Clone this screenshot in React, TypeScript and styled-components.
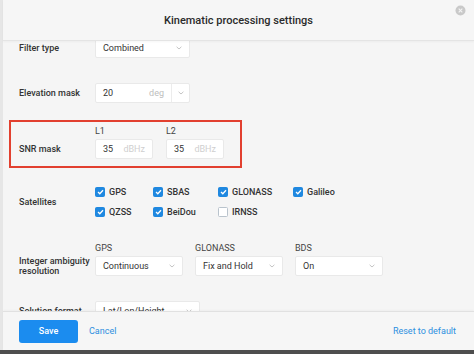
import { useLayoutEffect, useRef } from "react";
import styled, { createGlobalStyle } from "styled-components";

const GlobalStyle = createGlobalStyle`
  html, body {
    margin: 0;
    padding: 0;
    background: #4e4e4e;
    font-family: Roboto, "Liberation Sans", sans-serif;
  }
`;

const Screen = styled.div`
  width: 474px;
  height: 354px;
  background: #4e4e4e;
`;

const Modal = styled.div`
  height: 350px;
  display: flex;
  flex-direction: column;
  background: #f5f5f5;
  border-left: 3px solid #e6e6e6;
`;

const Header = styled.div`
  position: relative;
  height: 40px;
  flex-shrink: 0;
  display: flex;
  align-items: center;
  justify-content: center;
  background: #f6f6f6;
  border-bottom: 1px solid #e4e4e4;
  box-shadow: 0 1px 2px rgba(0, 0, 0, 0.04);
  z-index: 1;
`;

const Title = styled.h1`
  margin: 0;
  font-size: 11px;
  font-weight: 500;
  color: #2b2b2b;
`;

const Close = styled.button`
  position: absolute;
  top: 5px;
  right: 8px;
  width: 11px;
  height: 11px;
  padding: 0;
  border: 0;
  background: none;
  display: flex;
`;

const Body = styled.div`
  flex: 1;
  overflow: hidden;
`;

const Content = styled.div`
  padding: 12px 0 40px;
  display: flex;
  flex-direction: column;
`;

const Row = styled.div<{ $gap?: number; $align?: string }>`
  display: flex;
  align-items: ${({ $align }) => $align || "center"};
  padding-left: 16px;
  margin-top: ${({ $gap }) => $gap || 0}px;
`;

const Highlight = styled.div`
  margin: 17px 0 0 6px;
  width: 233px;
  box-sizing: border-box;
  border: 2px solid #e2402f;
  padding: 4px 0 7px 8px;
  display: flex;
  align-items: flex-end;
`;

const Label = styled.div<{ $lh?: number }>`
  width: 76px;
  flex-shrink: 0;
  font-size: 9px;
  font-weight: 500;
  line-height: ${({ $lh }) => $lh || 11}px;
  color: #333;
`;

const Fields = styled.div`
  display: flex;
  gap: 13px;
`;

const Field = styled.div`
  display: flex;
  flex-direction: column;
  gap: 2px;
`;

const Caption = styled.div`
  font-size: 9px;
  line-height: 11px;
  color: #444;
`;

const Box = styled.div<{ $w: number }>`
  width: ${({ $w }) => $w}px;
  height: 20px;
  box-sizing: border-box;
  display: flex;
  align-items: center;
  background: #fff;
  border: 1px solid #e9e9e9;
  border-radius: 2px;
  font-size: 9px;
  color: #333;
`;

const Value = styled.span`
  flex: 1;
  padding-left: 7px;
`;

const Unit = styled.span<{ $faint?: boolean }>`
  padding-right: 7px;
  color: ${({ $faint }) => ($faint ? "#cfcfcf" : "#bdbdbd")};
`;

const Caret = styled.span`
  width: 17px;
  height: 100%;
  display: flex;
  align-items: center;
  justify-content: center;
  border-left: 1px solid #ececec;
`;

const ChevronWrap = styled.span`
  padding-right: 7px;
  display: flex;
`;

const CheckGrid = styled.div`
  display: grid;
  grid-template-columns: 58px 65px 75px auto;
  row-gap: 6px;
`;

const Check = styled.label`
  display: flex;
  align-items: center;
  gap: 4px;
  height: 14px;
  font-size: 9px;
  font-weight: 500;
  color: #333;
`;

const Tick = styled.span<{ $on: boolean }>`
  width: 10px;
  height: 10px;
  border-radius: 1.5px;
  box-sizing: border-box;
  display: flex;
  align-items: center;
  justify-content: center;
  background: ${({ $on }) => ($on ? "#1f88e0" : "#fff")};
  border: 1px solid ${({ $on }) => ($on ? "#1f88e0" : "#b9c3cc")};
`;

const Columns = styled.div`
  display: flex;
  gap: 12px;
`;

const Footer = styled.div`
  height: 38px;
  flex-shrink: 0;
  display: flex;
  align-items: center;
  padding: 0 18px 0 16px;
  border-top: 1px solid #e1e1e1;
  background: #f6f6f6;
  box-shadow: 0 -1px 2px rgba(0, 0, 0, 0.03);
`;

const SaveButton = styled.button`
  width: 59px;
  height: 23px;
  border: 0;
  border-radius: 3px;
  background: #1b8cef;
  color: #fff;
  font-family: inherit;
  font-size: 9px;
  font-weight: 500;
`;

const LinkButton = styled.button<{ $push?: boolean }>`
  border: 0;
  background: none;
  padding: 0;
  margin-left: ${({ $push }) => ($push ? "auto" : "11px")};
  color: #2d8fe0;
  font-family: inherit;
  font-size: 9px;
`;

const Chevron = () => (
  <svg width="6" height="4" viewBox="0 0 6 4">
    <path d="M0.6 0.8 L3 3 L5.4 0.8" fill="none" stroke="#b5b5b5" strokeWidth="0.8" />
  </svg>
);

const Select = ({ value, w }: { value: string; w: number }) => (
  <Box $w={w}>
    <Value>{value}</Value>
    <ChevronWrap>
      <Chevron />
    </ChevronWrap>
  </Box>
);

const CheckMark = () => (
  <svg width="7" height="6" viewBox="0 0 7 6">
    <path d="M1 3 L2.8 4.7 L6 1.2" fill="none" stroke="#fff" strokeWidth="1.3" />
  </svg>
);

const satellites = [
  { name: "GPS", on: true },
  { name: "SBAS", on: true },
  { name: "GLONASS", on: true },
  { name: "Galileo", on: true },
  { name: "QZSS", on: true },
  { name: "BeiDou", on: true },
  { name: "IRNSS", on: false },
];

const ambiguity = [
  { system: "GPS", mode: "Continuous" },
  { system: "GLONASS", mode: "Fix and Hold" },
  { system: "BDS", mode: "On" },
];

export default function App() {
  const body = useRef<HTMLDivElement>(null);

  useLayoutEffect(() => {
    if (body.current) body.current.scrollTop = 15;
  }, []);

  return (
    <Screen>
      <GlobalStyle />
      <Modal>
        <Header>
          <Title>Kinematic processing settings</Title>
          <Close aria-label="Close">
            <svg width="11" height="11" viewBox="0 0 11 11">
              <circle cx="5.5" cy="5.5" r="5" fill="#c9c9c9" />
              <path d="M3.7 3.7 L7.3 7.3 M7.3 3.7 L3.7 7.3" stroke="#f4f4f4" strokeWidth="1.1" />
            </svg>
          </Close>
        </Header>

        <Body ref={body}>
          <Content>
            <Row>
              <Label>Filter type</Label>
              <Select value="Combined" w={95} />
            </Row>

            <Row $gap={25}>
              <Label>Elevation mask</Label>
              <Box $w={95}>
                <Value>20</Value>
                <Unit>deg</Unit>
                <Caret>
                  <Chevron />
                </Caret>
              </Box>
            </Row>

            <Highlight>
              <Label $lh={20}>SNR mask</Label>
              <Fields>
                {["L1", "L2"].map((band) => (
                  <Field key={band}>
                    <Caption>{band}</Caption>
                    <Box $w={58}>
                      <Value>35</Value>
                      <Unit $faint>dBHz</Unit>
                    </Box>
                  </Field>
                ))}
              </Fields>
            </Highlight>

            <Row $gap={17}>
              <Label>Satellites</Label>
              <CheckGrid>
                {satellites.map((s) => (
                  <Check key={s.name}>
                    <Tick $on={s.on}>{s.on && <CheckMark />}</Tick>
                    {s.name}
                  </Check>
                ))}
              </CheckGrid>
            </Row>

            <Row $gap={24} $align="flex-end">
              <Label $lh={10}>
                Integer ambiguity
                <br />
                resolution
              </Label>
              <Columns>
                {ambiguity.map((a) => (
                  <Field key={a.system}>
                    <Caption>{a.system}</Caption>
                    <Select value={a.mode} w={88} />
                  </Field>
                ))}
              </Columns>
            </Row>

            <Row $gap={25}>
              <Label>Solution format</Label>
              <Select value="Lat/Lon/Height" w={105} />
            </Row>
          </Content>
        </Body>

        <Footer>
          <SaveButton>Save</SaveButton>
          <LinkButton>Cancel</LinkButton>
          <LinkButton $push>Reset to default</LinkButton>
        </Footer>
      </Modal>
    </Screen>
  );
}
